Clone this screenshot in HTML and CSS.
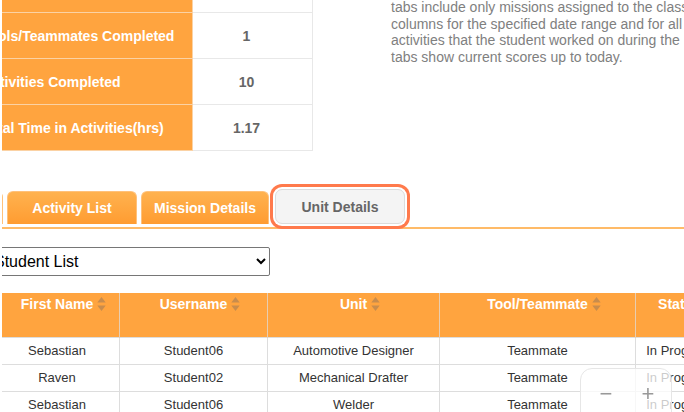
FILE: index.html
```html
<!DOCTYPE html>
<html lang="en">
<head>
    <meta charset="UTF-8">
    <meta name="viewport" content="width=device-width, initial-scale=1.0">
    <title>Unit Details</title>
    <link rel="stylesheet" href="styles.css">
</head>
<body>
    <div class="viewport">
        <section class="overview">
            <table class="stats">
                <colgroup><col class="stats-label"><col class="stats-value"></colgroup>
                <tr><th>Missions Completed</th><td>3</td></tr>
                <tr><th>Tools/Teammates Completed</th><td>1</td></tr>
                <tr><th>Activities Completed</th><td>10</td></tr>
                <tr><th>Total Time in Activities(hrs)</th><td>1.17</td></tr>
            </table>
            <p class="notes">tabs include only missions assigned to the class<br>columns for the specified date range and for all<br>activities that the student worked on during the<br>tabs show current scores up to today.</p>
        </section>

        <nav class="tabs">
            <div class="tab">Summary</div>
            <div class="tab">Activity List</div>
            <div class="tab tab-narrow">Mission Details</div>
            <div class="tab active">Unit Details</div>
        </nav>

        <select class="view-select">
            <option>Student List</option>
        </select>

        <table class="details">
            <colgroup>
                <col style="width:125px"><col style="width:148px"><col style="width:172px">
                <col style="width:196px"><col style="width:88px"><col style="width:120px">
            </colgroup>
            <thead>
                <tr>
                    <th>First Name<svg class="sort" viewBox="0 0 9 15"><path d="M4.5 0 9 6H0z"/><path d="M0 9h9l-4.5 6z"/></svg></th>
                    <th>Username<svg class="sort" viewBox="0 0 9 15"><path d="M4.5 0 9 6H0z"/><path d="M0 9h9l-4.5 6z"/></svg></th>
                    <th>Unit<svg class="sort" viewBox="0 0 9 15"><path d="M4.5 0 9 6H0z"/><path d="M0 9h9l-4.5 6z"/></svg></th>
                    <th>Tool/Teammate<svg class="sort" viewBox="0 0 9 15"><path d="M4.5 0 9 6H0z"/><path d="M0 9h9l-4.5 6z"/></svg></th>
                    <th>Status<svg class="sort" viewBox="0 0 9 15"><path d="M4.5 0 9 6H0z"/><path d="M0 9h9l-4.5 6z"/></svg></th>
                    <th>Score<svg class="sort" viewBox="0 0 9 15"><path d="M4.5 0 9 6H0z"/><path d="M0 9h9l-4.5 6z"/></svg></th>
                </tr>
            </thead>
            <tbody>
                <tr><td>Sebastian</td><td>Student06</td><td>Automotive Designer</td><td>Teammate</td><td>In Progress</td><td>0</td></tr>
                <tr><td>Raven</td><td>Student02</td><td>Mechanical Drafter</td><td>Teammate</td><td>In Progress</td><td>0</td></tr>
                <tr><td>Sebastian</td><td>Student06</td><td>Welder</td><td>Teammate</td><td>In Progress</td><td>0</td></tr>
            </tbody>
        </table>
    </div>

    <!-- control flotante de zoom -->
    <div class="zoom-ctrl"><span>&minus;</span><span>+</span></div>
</body>
</html>
```

FILE: styles.css
```css
body {
    margin: 0;
    padding: 0;
    font-family: "Liberation Sans", Arial, sans-serif;
    background-color: #fff;
    overflow: hidden;
}

.viewport {
    margin-left: 2px;
    height: 412px;
    overflow: hidden;
}

/* resumen */
.overview {
    display: flex;
    align-items: flex-start;
    margin-top: -34px;
}

.stats {
    flex: none;
    border-collapse: collapse;
    table-layout: fixed;
    width: 342px;
    margin-left: -32px;
}

.stats .stats-label {
    width: 222px;
}

.stats .stats-value {
    width: 120px;
}

.stats th,
.stats td {
    height: 45px;
    padding: 0;
    font-size: 14px;
    font-weight: bold;
    white-space: nowrap;
}

.stats th {
    background-color: #ffa43f;
    color: #fff;
    text-align: left;
    padding-left: 11px;
    border: 1px solid #fbd2a4;
}

.stats td {
    color: #666;
    text-align: center;
    padding-right: 12px;
    border: 1px solid #e8e8e8;
}

.notes {
    margin: 33px 0 0 78px;
    font-size: 14px;
    line-height: 16.67px;
    color: #808080;
    white-space: nowrap;
}

/* pestañas */
.tabs {
    display: flex;
    align-items: flex-end;
    margin: 38px 0 0 -129px;
    padding-bottom: 3px;
    border-bottom: 2px solid #ffbb68;
}

.tab {
    flex: none;
    width: 130px;
    height: 33px;
    margin-right: 4px;
    box-sizing: border-box;
    border: 1px solid #ffc17a;
    border-bottom: none;
    border-radius: 6px 6px 0 0;
    background: linear-gradient(#ffb24f, #ff9c31);
    color: #fff;
    font-size: 14px;
    font-weight: bold;
    display: flex;
    align-items: center;
    justify-content: center;
}

.tab-narrow {
    width: 128px;
}

.tab.active {
    height: 35px;
    margin-left: 2px;
    background: #f4f4f4;
    color: #666;
    border: 1px solid #dcdcdc;
    border-radius: 7px;
    box-shadow: 0 0 0 2px #fff, 0 0 0 5px #ff7a4c;
}

.view-select {
    display: block;
    margin: 18px 0 0 -17px;
    width: 285px;
    height: 29px;
    padding: 0 4px;
    font-family: "Liberation Sans", Arial, sans-serif;
    font-size: 16px;
    color: #000;
    background-color: #fff;
    border: 1px solid #767676;
    border-radius: 2px;
}

/* tabla de detalles */
.details {
    border-collapse: collapse;
    table-layout: fixed;
    width: 849px;
    margin: 17px 0 0 -8px;
}

.details th {
    height: 44px;
    padding: 3px 4px 0;
    box-sizing: border-box;
    vertical-align: top;
    background-color: #ffa43f;
    color: #fff;
    font-size: 14px;
    font-weight: bold;
    line-height: 16px;
    white-space: nowrap;
    border-left: 1px solid #e8cdb0;
}

.details .sort {
    width: 9px;
    height: 14px;
    margin: 0 -13px -2px 4px;
    fill: #c98c4c;
}

.details td {
    height: 26px;
    padding: 0 4px;
    text-align: center;
    font-size: 13px;
    color: #333;
    white-space: nowrap;
    border: 1px solid #dddddd;
}

.zoom-ctrl {
    position: fixed;
    left: 580px;
    top: 368px;
    width: 92px;
    height: 60px;
    box-sizing: border-box;
    padding-left: 4px;
    display: flex;
    border: 1px solid #e6e6e6;
    border-radius: 12px;
    background-color: rgba(255, 255, 255, 0.75);
}

.zoom-ctrl span {
    width: 42px;
    height: 50px;
    line-height: 50px;
    text-align: center;
    font-size: 22px;
    color: #999;
}
```
